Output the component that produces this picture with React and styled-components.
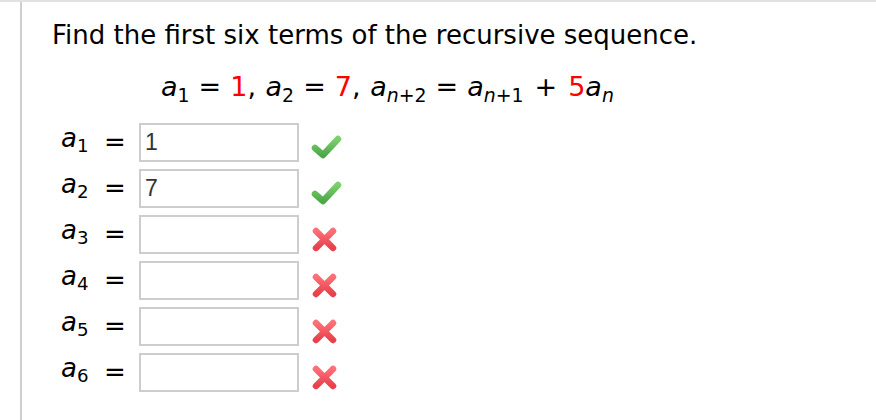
import React from "react";
import styled, { createGlobalStyle } from "styled-components";

const GlobalStyle = createGlobalStyle`
  html, body {
    margin: 0;
    padding: 0;
    background: #fff;
  }
  body {
    font-family: "DejaVu Sans", Verdana, sans-serif;
    color: #000;
  }
`;

const Page = styled.div`
  border-top: 2px solid #e2e2e2;
  height: 418px;
`;

const Panel = styled.div`
  margin-left: 20px;
  border-left: 2px solid #cfcfcf;
  height: 100%;
  padding: 18px 0 0 30px;
  box-sizing: border-box;
`;

const Title = styled.div`
  font-size: 26px;
  line-height: 30px;
`;

const Formula = styled.div`
  font-size: 27px;
  line-height: 30px;
  margin: 22px 0 0 109px;
  white-space: nowrap;
  word-spacing: 1px;
`;

const Var = styled.i`
  font-style: italic;
`;

const Sub = styled.sub`
  font-size: 70%;
  vertical-align: -0.3em;
  font-style: ${({ $italic }) => ($italic ? "italic" : "normal")};
`;

const Red = styled.span`
  color: #ff0000;
`;

const Op = styled.span`
  padding: 0 ${({ $pad }) => $pad || 9}px;
`;

const Rows = styled.div`
  display: flex;
  flex-direction: column;
  gap: 7px;
  margin: 13px 0 0 9px;
`;

const Row = styled.div`
  display: flex;
  align-items: center;
  height: 39px;
`;

const Label = styled.div`
  width: 45px;
  font-size: 26px;
  line-height: 30px;
  white-space: nowrap;
`;

const Eq = styled.div`
  width: 33px;
  font-size: 26px;
  line-height: 30px;
  margin-left: -2px;
`;

const Input = styled.div`
  width: 160px;
  height: 39px;
  margin-left: 2px;
  box-sizing: border-box;
  border: 2px solid #cdcdcd;
  padding-left: 4px;
  font-family: "Liberation Sans", Arial, sans-serif;
  font-size: 23px;
  line-height: 35px;
  color: #333;
`;

const Mark = styled.div`
  margin-left: 12px;
  margin-top: 10px;
  width: 32px;
  height: 28px;
  display: flex;
  align-items: center;
  justify-content: flex-start;
`;

const Check = () => (
  <svg width="31" height="26" viewBox="0 0 31 26">
    <defs>
      <linearGradient id="gck" x1="0" y1="0" x2="0" y2="1">
        <stop offset="0" stopColor="#7ccf6c" />
        <stop offset="1" stopColor="#4ea84a" />
      </linearGradient>
    </defs>
    <path
      d="M4 14 L12 21 L27 5"
      fill="none"
      stroke="url(#gck)"
      strokeWidth="6.5"
      strokeLinecap="round"
      strokeLinejoin="round"
    />
  </svg>
);

const Cross = () => (
  <svg width="27" height="27" viewBox="0 0 27 27">
    <defs>
      <linearGradient id="gx" x1="0" y1="0" x2="0" y2="1">
        <stop offset="0" stopColor="#ff6f78" />
        <stop offset="1" stopColor="#e8404c" />
      </linearGradient>
    </defs>
    <path
      d="M5 5 L22 22 M22 5 L5 22"
      fill="none"
      stroke="url(#gx)"
      strokeWidth="6.5"
      strokeLinecap="round"
    />
  </svg>
);

const answers = [
  { n: 1, value: "1", ok: true },
  { n: 2, value: "7", ok: true },
  { n: 3, value: "", ok: false },
  { n: 4, value: "", ok: false },
  { n: 5, value: "", ok: false },
  { n: 6, value: "", ok: false },
];

export default function App() {
  return (
    <>
      <GlobalStyle />
      <Page>
        <Panel>
          <Title>Find the first six terms of the recursive sequence.</Title>
          <Formula>
            <Var>a</Var>
            <Sub>1</Sub>
            <Op>=</Op>
            <Red>1</Red>, <Var>a</Var>
            <Sub>2</Sub>
            <Op>=</Op>
            <Red>7</Red>, <Var>a</Var>
            <Sub $italic>n</Sub>
            <Sub>+2</Sub>
            <Op>=</Op>
            <Var>a</Var>
            <Sub $italic>n</Sub>
            <Sub>+1</Sub>
            <Op $pad={11}>+</Op>
            <Red>5</Red>
            <Var>a</Var>
            <Sub $italic>n</Sub>
          </Formula>
          <Rows>
            {answers.map((a) => (
              <Row key={a.n}>
                <Label>
                  <Var>a</Var>
                  <Sub>{a.n}</Sub>
                </Label>
                <Eq>=</Eq>
                <Input>{a.value}</Input>
                <Mark>{a.ok ? <Check /> : <Cross />}</Mark>
              </Row>
            ))}
          </Rows>
        </Panel>
      </Page>
    </>
  );
}
